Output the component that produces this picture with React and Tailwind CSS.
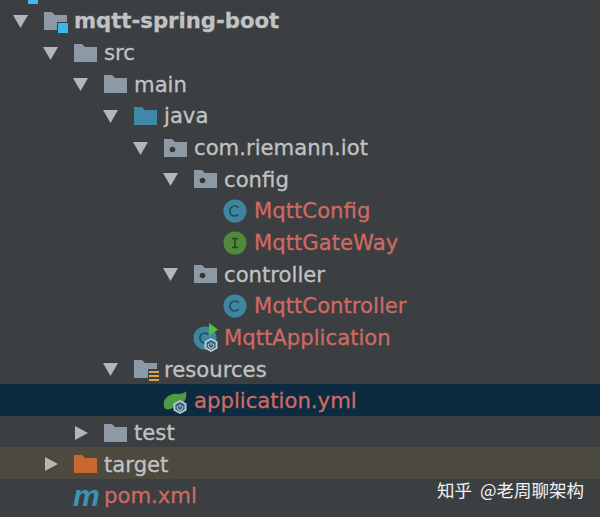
const font = { dejavu: "font-['DejaVu_Sans',sans-serif]" };

function Arrow({ open }) {
  return (
    <svg width="16" height="16" viewBox="0 0 16 16" className="shrink-0">
      {open ? (
        <polygon points="0,2 15,2 7.5,15" fill="#b4b6b8" />
      ) : (
        <polygon points="2,1 15,8 2,15" fill="#b4b6b8" />
      )}
    </svg>
  );
}

function Folder({ color = "#8d9aa5", dot, children }) {
  return (
    <svg width="25" height="24" viewBox="0 0 25 24" className="shrink-0 overflow-visible">
      <path d="M1 3h8l3 3h12v15H1z" fill={color} />
      {dot && <circle cx="9.5" cy="13.5" r="2.8" fill="#33383c" />}
      {children}
    </svg>
  );
}

function ClassIcon({ letter = "C", bg = "#3e86a0", fg = "#1c4a5e", children }) {
  return (
    <svg width="25" height="24" viewBox="0 0 25 24" className="shrink-0 overflow-visible">
      <circle cx="12" cy="12" r="11.5" fill={bg} />
      {letter === "C" ? (
        <path d="M15.5 8.6a5 5 0 1 0 0 6.8" fill="none" stroke={fg} strokeWidth="1.6" />
      ) : (
        <path d="M9 7.5h6M9 16.5h6M12 7.5v9" fill="none" stroke={fg} strokeWidth="1.6" />
      )}
      {children}
    </svg>
  );
}

function SpringBadge({ x, y }) {
  return (
    <g transform={`translate(${x} ${y})`}>
      <polygon points="7,0 13.5,3.5 13.5,10.5 7,14 0.5,10.5 0.5,3.5" fill="#b4ccdb" />
      <polygon points="7,2 11.6,4.6 11.6,9.4 7,12 2.4,9.4 2.4,4.6" fill="#3d5f75" />
      <path d="M5.2 5.6a2.7 2.7 0 1 0 3.6 0M7 4.3v3" fill="none" stroke="#c4d8e4" strokeWidth="1" />
    </g>
  );
}

const rows = [
  { depth: 0, open: true, label: "mqtt-spring-boot", bold: true, icon: "module" },
  { depth: 1, open: true, label: "src", icon: "folder" },
  { depth: 2, open: true, label: "main", icon: "folder" },
  { depth: 3, open: true, label: "java", icon: "source" },
  { depth: 4, open: true, label: "com.riemann.iot", icon: "pkg" },
  { depth: 5, open: true, label: "config", icon: "pkg" },
  { depth: 6, label: "MqttConfig", icon: "class", red: true },
  { depth: 6, label: "MqttGateWay", icon: "iface", red: true },
  { depth: 5, open: true, label: "controller", icon: "pkg" },
  { depth: 6, label: "MqttController", icon: "class", red: true },
  { depth: 5, label: "MqttApplication", icon: "app", red: true },
  { depth: 3, open: true, label: "resources", icon: "res" },
  { depth: 4, label: "application.yml", icon: "yml", red: true, bg: "bg-[#0c2a40]" },
  { depth: 2, open: false, label: "test", icon: "folder" },
  { depth: 1, open: false, label: "target", icon: "target", bg: "bg-[#4c493f]" },
  { depth: 1, label: "pom.xml", icon: "pom", red: true },
];

function RowIcon({ type }) {
  if (type === "folder") return <Folder />;
  if (type === "source") return <Folder color="#3f88a8" />;
  if (type === "pkg") return <Folder dot />;
  if (type === "target") return <Folder color="#c9682e" />;
  if (type === "module")
    return (
      <Folder>
        <rect x="14" y="13" width="12" height="12" fill="#3c3f41" />
        <rect x="15" y="14" width="10" height="10" fill="#3db8ee" />
      </Folder>
    );
  if (type === "res")
    return (
      <Folder>
        <rect x="15" y="12" width="12" height="13" fill="#3c3f41" />
        <path d="M16 15h10M16 19h10M16 23h10" stroke="#d9a441" strokeWidth="2" />
      </Folder>
    );
  if (type === "class") return <ClassIcon />;
  if (type === "iface") return <ClassIcon letter="I" bg="#4f8a3c" fg="#24471c" />;
  if (type === "app")
    return (
      <ClassIcon>
        <polygon points="16,-3 25,3.5 16,10" fill="#4fc13b" />
        <SpringBadge x={11} y={12} />
      </ClassIcon>
    );
  if (type === "yml")
    return (
      <svg width="25" height="24" viewBox="0 0 25 24" className="shrink-0 overflow-visible">
        <path d="M1 18C-1 9 8 4 14 5c4 0 8-1 9-3 1 5 0 10-4 12l-9 5c-4 2-8 2-9-1z" fill="#4f9a46" />
        <SpringBadge x={10} y={11} />
      </svg>
    );
  return (
    <span className="w-[25px] shrink-0 text-center font-['Liberation_Sans',sans-serif] text-[30px] leading-6 font-bold text-[#3d93b8] italic">
      m
    </span>
  );
}

export default function App() {
  return (
    <div className={`relative h-[517px] w-[600px] overflow-hidden bg-[#3c3f41] ${font.dejavu}`}>
      <div className="ml-[28px] h-1 w-[10px] bg-[#3db8ee]" />
      {rows.map((row) => (
        <div
          key={row.label}
          className={`flex h-[31.68px] items-center pt-[2px] ${row.bg ?? ""}`}
          style={{ paddingLeft: row.depth * 30 + 13 }}
        >
          <span className="flex w-[30px] shrink-0">
            {row.open !== undefined && <Arrow open={row.open} />}
          </span>
          <RowIcon type={row.icon} />
          <span
            className={`ml-[6px] text-[21.2px] leading-none whitespace-nowrap [-webkit-text-stroke:0.3px_currentColor] ${row.red ? "text-[#cf6a63]" : "text-[#c0c2c4]"} ${row.bold ? "font-bold" : ""}`}
          >
            {row.label}
          </span>
        </div>
      ))}
      <div className="absolute top-[480px] right-[16px] flex gap-2 font-['Noto_Sans_CJK_SC',sans-serif] text-[17.5px] leading-5 whitespace-nowrap text-[#f2f2f2]">
        <span>知乎</span>
        <span>@老周聊架构</span>
      </div>
    </div>
  );
}
